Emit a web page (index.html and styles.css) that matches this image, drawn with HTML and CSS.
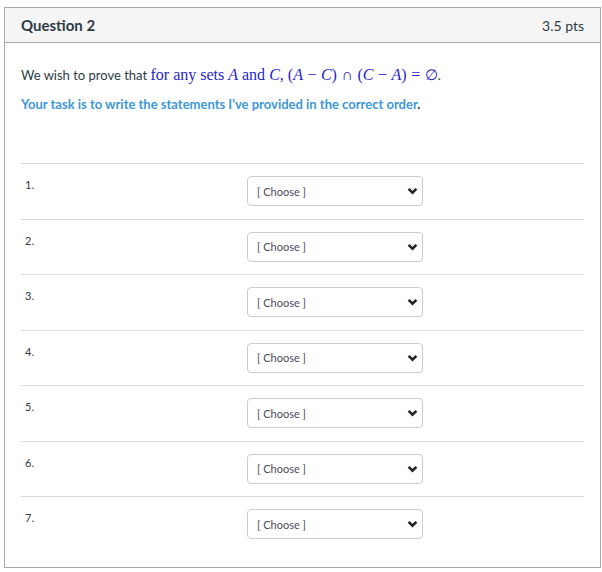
FILE: index.html
```html
<!DOCTYPE html>
<html>
<head>
<meta charset="utf-8">
<link rel="stylesheet" href="styles.css">
</head>
<body>
<div class="question">
  <div class="q-header">
    <span class="q-title">Question 2</span>
    <span class="q-pts">3.5 pts</span>
  </div>
  <div class="q-body">
    <p class="q-text">We wish to prove that <span class="math">for any sets <i>A</i> and <i>C</i>, (<i>A</i><span class="op">−</span><i>C</i>)<span class="op">∩</span>(<i>C</i><span class="op">−</span><i>A</i>)<span class="op">=</span><span class="empty">∅</span></span>.</p>
    <p class="q-task"><span class="task-blue">Your task is to write the statements I've provided in the correct order</span>.</p>
    <div class="rows">
      <div class="row"><span class="num">1.</span><div class="select"><span class="choose">[ Choose ]</span><svg class="chev" width="11" height="8" viewBox="0 0 11 8"><path d="M1.6 1.8 L5.5 5.7 L9.4 1.8" fill="none" stroke="#222" stroke-width="2.6"/></svg></div></div>
      <div class="row"><span class="num">2.</span><div class="select"><span class="choose">[ Choose ]</span><svg class="chev" width="11" height="8" viewBox="0 0 11 8"><path d="M1.6 1.8 L5.5 5.7 L9.4 1.8" fill="none" stroke="#222" stroke-width="2.6"/></svg></div></div>
      <div class="row"><span class="num">3.</span><div class="select"><span class="choose">[ Choose ]</span><svg class="chev" width="11" height="8" viewBox="0 0 11 8"><path d="M1.6 1.8 L5.5 5.7 L9.4 1.8" fill="none" stroke="#222" stroke-width="2.6"/></svg></div></div>
      <div class="row"><span class="num">4.</span><div class="select"><span class="choose">[ Choose ]</span><svg class="chev" width="11" height="8" viewBox="0 0 11 8"><path d="M1.6 1.8 L5.5 5.7 L9.4 1.8" fill="none" stroke="#222" stroke-width="2.6"/></svg></div></div>
      <div class="row"><span class="num">5.</span><div class="select"><span class="choose">[ Choose ]</span><svg class="chev" width="11" height="8" viewBox="0 0 11 8"><path d="M1.6 1.8 L5.5 5.7 L9.4 1.8" fill="none" stroke="#222" stroke-width="2.6"/></svg></div></div>
      <div class="row"><span class="num">6.</span><div class="select"><span class="choose">[ Choose ]</span><svg class="chev" width="11" height="8" viewBox="0 0 11 8"><path d="M1.6 1.8 L5.5 5.7 L9.4 1.8" fill="none" stroke="#222" stroke-width="2.6"/></svg></div></div>
      <div class="row"><span class="num">7.</span><div class="select"><span class="choose">[ Choose ]</span><svg class="chev" width="11" height="8" viewBox="0 0 11 8"><path d="M1.6 1.8 L5.5 5.7 L9.4 1.8" fill="none" stroke="#222" stroke-width="2.6"/></svg></div></div>
    </div>
  </div>
</div>
</body>
</html>
```
FILE: styles.css
```css
html, body {
  margin: 0;
  padding: 0;
  background: #fff;
}
body {
  font-family: Lato, "Liberation Sans", sans-serif;
  color: #2d3b45;
}
.question {
  margin: 7px 1px 0 4px;
  width: 595px;
  height: 559px;
  border: 1px solid #a8a8a8;
  box-sizing: content-box;
}
.q-header {
  height: 34px;
  background: #f5f5f5;
  border-bottom: 1px solid #a8a8a8;
  display: flex;
  align-items: center;
  justify-content: space-between;
  padding: 0 16px;
}
.q-title {
  font-weight: bold;
  font-size: 15px;
  color: #2d3b45;
}
.q-pts {
  font-size: 14px;
  color: #2d3b45;
}
.q-body {
  padding: 0 16px 16px 16px;
}
.q-text {
  margin: 23px 0 0 0;
  font-size: 13px;
  line-height: 18px;
}
.math {
  font-family: "Liberation Serif", serif;
  font-size: 16px;
  color: #1f1fcc;
}
.math i {
  font-style: italic;
}
.op {
  padding: 0 4.5px;
}
.empty {
  font-family: "DejaVu Serif", serif;
  font-size: 15px;
}
.q-task {
  margin: 11px 0 0 0;
  font-size: 13px;
  line-height: 18px;
  font-weight: bold;
}
.task-blue {
  color: #3d97d6;
}
.rows {
  margin-top: 50px;
}
.row {
  height: 55.5px;
  box-sizing: border-box;
  border-top: 1px solid #dcdcdc;
  display: grid;
  grid-template-columns: 226px 176px;
  align-items: start;
  padding-top: 12px;
}
.num {
  font-size: 11px;
  padding-left: 4px;
  padding-top: 2px;
  color: #2d3b45;
}
.select {
  height: 30px;
  box-sizing: border-box;
  border: 1px solid #c7cdd1;
  border-radius: 4px;
  display: flex;
  align-items: center;
  justify-content: space-between;
  padding: 0 4px 0 9px;
  background: #fff;
}
.choose {
  font-size: 11px;
  color: #4a4a5a;
}
.chev {
  display: block;
}
```
